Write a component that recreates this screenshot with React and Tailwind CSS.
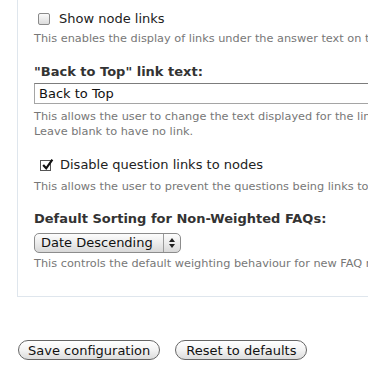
export default function App() {
  const font = { fontFamily: '"DejaVu Sans", Verdana, sans-serif' }
  return (
    <div className="w-[368px] h-[378px] overflow-hidden bg-white text-[#222]" style={font}>
      <div className="ml-[17px] w-[400px] h-[297px] border-l border-b border-[#dfe6ed] pl-[16px] pt-[10px]">
        <label className="flex items-center h-[18px] text-[13px] pl-[4px]">
          <span className="w-[12px] h-[12px] rounded-[2px] border border-[#8a8a8a] bg-gradient-to-b from-[#fafafa] to-[#dcdcdc] mr-[9px]" />
          Show node links
        </label>
        <p className="mt-[3px] h-[16px] leading-[16px] text-[11.3px] text-[#777] whitespace-nowrap">
          This enables the display of links under the answer text on the main FAQ page.
        </p>

        <p className="mt-[17px] h-[16px] leading-[16px] text-[13px] font-bold text-[#333] whitespace-nowrap">
          "Back to Top" link text:
        </p>
        <div className="mt-[3px] h-[21px] border border-[#a5a5a5] border-t-[#7c7c7c] flex items-center pl-[4px] text-[13px] text-[#111]">
          Back to Top
        </div>
        <p className="mt-[5px] leading-[15px] text-[11.3px] text-[#777] whitespace-nowrap">
          This allows the user to change the text displayed for the link to return to the top.
          <br />
          Leave blank to have no link.
        </p>

        <label className="mt-[17px] flex items-center h-[18px] text-[13px] pl-[6px]">
          <span className="relative w-[11px] h-[11px] border border-[#555] bg-white mr-[9px]">
            <svg viewBox="0 0 12 12" className="absolute -top-[3px] left-0 w-[13px] h-[13px]">
              <path d="M2 6.5 L4.8 9.5 L10.5 1.5" fill="none" stroke="#111" strokeWidth="2" />
            </svg>
          </span>
          Disable question links to nodes
        </label>
        <p className="mt-[5px] h-[16px] leading-[16px] text-[11.3px] text-[#777] whitespace-nowrap">
          This allows the user to prevent the questions being links to the nodes.
        </p>

        <p className="mt-[16px] h-[16px] leading-[16px] text-[13px] font-bold text-[#333] whitespace-nowrap">
          Default Sorting for Non-Weighted FAQs:
        </p>
        <div className="mt-[6px] w-[147px] h-[20px] rounded-[5px] border border-[#8c8c8c] bg-gradient-to-b from-[#fdfdfd] via-[#ececec] to-[#d8d8d8] flex items-center text-[13px] text-[#111]">
          <span className="flex-1 pl-[6px] whitespace-nowrap">Date Descending</span>
          <span className="w-[17px] h-full border-l border-[#9a9a9a] flex flex-col items-center justify-center gap-[2px]">
            <svg viewBox="0 0 6 4" className="w-[6px] h-[4px]"><path d="M3 0 L6 4 L0 4 Z" fill="#222" /></svg>
            <svg viewBox="0 0 6 4" className="w-[6px] h-[4px]"><path d="M0 0 L6 0 L3 4 Z" fill="#222" /></svg>
          </span>
        </div>
        <p className="mt-[3px] h-[16px] leading-[16px] text-[11.3px] text-[#777] whitespace-nowrap">
          This controls the default weighting behaviour for new FAQ nodes.
        </p>
      </div>

      <div className="mt-[43px] ml-[18px] flex gap-[15px]">
        <button className="h-[20px] px-[9px] rounded-full border border-[#666] bg-gradient-to-b from-white via-[#f3f3f3] to-[#dcdcdc] text-[13px] text-[#111] leading-none whitespace-nowrap">
          Save configuration
        </button>
        <button className="h-[20px] px-[10px] rounded-full border border-[#666] bg-gradient-to-b from-white via-[#f3f3f3] to-[#dcdcdc] text-[13px] text-[#111] leading-none whitespace-nowrap">
          Reset to defaults
        </button>
      </div>
    </div>
  )
}
